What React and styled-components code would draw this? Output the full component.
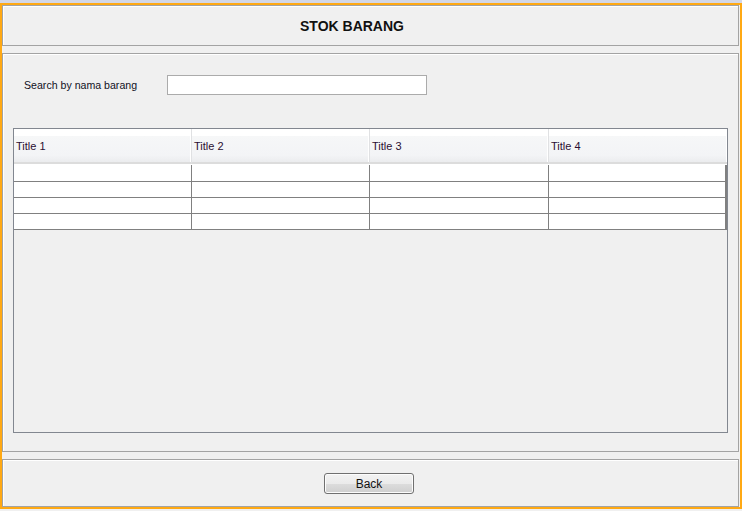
import React from "react";
import styled, { createGlobalStyle } from "styled-components";

const GlobalStyle = createGlobalStyle`
  html, body {
    margin: 0;
    padding: 0;
    background: #f0f0f0;
  }
  body {
    font-family: "Liberation Sans", Arial, sans-serif;
    font-size: 11px;
    color: #111;
  }
`;

//Window
const Window = styled.div`
  width: 742px;
  height: 511px;
  box-sizing: border-box;
  border-top: 3px solid #d3d7e6;
  background: #f0f0f0;
`;

//Frame with the orange edge
const Frame = styled.div`
  width: 742px;
  height: 506px;
  box-sizing: border-box;
  border: 2px solid #ffa914;
  display: flex;
  flex-direction: column;
  gap: 7px;
  padding-right: 1px;
`;

//Panel (etched)
const Panel = styled.div`
  box-sizing: border-box;
  border: 1px solid #a3a3a3;
  box-shadow: inset 1px 1px 0 #fff;
  height: ${(p) => p.h}px;
  flex: ${(p) => (p.grow ? "1" : "none")};
`;

const HeaderPanel = styled(Panel)`
  display: flex;
  align-items: center;
  justify-content: center;
  padding-right: 37px;
`;

const Title = styled.h1`
  margin: 0;
  font-family: "Liberation Sans", Arial, sans-serif;
  font-weight: bold;
  font-size: 14px;
  color: #111;
`;

const BodyPanel = styled(Panel)`
  display: flex;
  flex-direction: column;
  padding: 21px 10px 18px 10px;
`;

const SearchRow = styled.div`
  display: flex;
  align-items: center;
  height: 20px;
  padding-left: 11px;
`;

const Label = styled.label`
  width: 143px;
  font-size: 10.6px;
  color: #10101e;
`;

const SearchInput = styled.input`
  box-sizing: border-box;
  width: 260px;
  height: 20px;
  border: 1px solid #ababab;
  background: #fff;
  padding: 0 3px;
  margin: 0;
  outline: none;
`;

//Table
const Table = styled.div`
  margin-top: 33px;
  flex: 1;
  border: 1px solid #828790;
  background: #f0f0f0;
  display: flex;
  flex-direction: column;
`;

const Grid = styled.div`
  display: grid;
  grid-template-columns: 178px 178px 179px 178px;
`;

const HeadCell = styled.div`
  box-sizing: border-box;
  height: 35px;
  padding: 0 2px;
  display: flex;
  align-items: center;
  font-size: 11px;
  color: #2a0f33;
  background: linear-gradient(
    to bottom,
    #ffffff 0%,
    #ffffff 20%,
    #f6f7f8 22%,
    #f3f4f6 80%,
    #ebecee 100%
  );
  border-right: ${(p) => (p.last ? "0" : "1px solid #e0e1e3")};
  box-shadow: inset -1px 0 0 #fff;
  border-bottom: 2px solid #dcdcdc;
`;

const Spacer = styled.div`
  height: 1px;
  background: #fff;
`;

const Cell = styled.div`
  box-sizing: border-box;
  height: ${(p) => (p.first ? 17 : 16)}px;
  background: #fff;
  border-right: ${(p) => (p.last ? 2 : 1)}px solid #808080;
  border-bottom: 1px solid #808080;
`;

const FooterPanel = styled(Panel)`
  display: flex;
  justify-content: center;
  align-items: flex-start;
  padding-top: 13px;
  padding-right: 3px;
`;

const Button = styled.button`
  box-sizing: border-box;
  width: 90px;
  height: 21px;
  border: 1px solid #707070;
  border-radius: 3px;
  font-family: "Liberation Sans", Arial, sans-serif;
  font-size: 12px;
  color: #111;
  padding: 0;
  background: linear-gradient(
    to bottom,
    #f2f2f2 0%,
    #ebebeb 50%,
    #dddddd 51%,
    #cfcfcf 100%
  );
  box-shadow: inset 0 0 0 1px #fcfcfc;
`;

const headers = ["Title 1", "Title 2", "Title 3", "Title 4"];
const rows = [0, 1, 2, 3];

export default function App() {
  return (
    <>
      <GlobalStyle />
      <Window>
        <Frame>
          <HeaderPanel h={41}>
            <Title>STOK BARANG</Title>
          </HeaderPanel>
          <BodyPanel grow>
            <SearchRow>
              <Label>Search by nama barang</Label>
              <SearchInput type="text" />
            </SearchRow>
            <Table>
              <Grid>
                {headers.map((h, i) => (
                  <HeadCell key={h} last={i === 3}>
                    {h}
                  </HeadCell>
                ))}
              </Grid>
              <Spacer />
              <Grid>
                {rows.map((r) =>
                  headers.map((h, i) => (
                    <Cell key={r + h} first={r === 0} last={i === 3} />
                  ))
                )}
              </Grid>
            </Table>
          </BodyPanel>
          <FooterPanel h={48}>
            <Button>Back</Button>
          </FooterPanel>
        </Frame>
      </Window>
    </>
  );
}
